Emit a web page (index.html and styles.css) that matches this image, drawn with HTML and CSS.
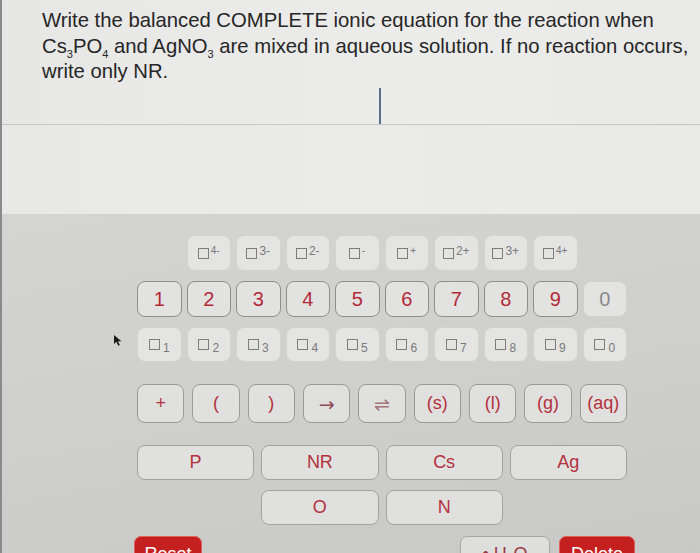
FILE: index.html
```html
<!DOCTYPE html>
<html>
<head>
<meta charset="utf-8">
<link rel="stylesheet" href="styles.css">
</head>
<body>
<div class="screen">
  <div class="question">
    <p class="prompt">Write the balanced COMPLETE ionic equation for the reaction when Cs<sub>3</sub>PO<sub>4</sub> and AgNO<sub>3</sub> are mixed in aqueous solution. If no reaction occurs, write only NR.</p>
    <div class="answer"><span class="caret"></span></div>
  </div>
  <div class="gap-area"></div>
  <div class="keypad">
    <div class="pad">
      <div class="row grid10 charges">
        <div class="key light first"><span class="lbl"><span class="box"></span><sup>4-</sup></span></div>
        <div class="key light"><span class="lbl"><span class="box"></span><sup class="big">3-</sup></span></div>
        <div class="key light"><span class="lbl"><span class="box"></span><sup class="big">2-</sup></span></div>
        <div class="key light"><span class="lbl"><span class="box"></span><sup>-</sup></span></div>
        <div class="key light"><span class="lbl"><span class="box"></span><sup>+</sup></span></div>
        <div class="key light"><span class="lbl"><span class="box"></span><sup class="big">2+</sup></span></div>
        <div class="key light"><span class="lbl"><span class="box"></span><sup class="big">3+</sup></span></div>
        <div class="key light"><span class="lbl"><span class="box"></span><sup>4+</sup></span></div>
      </div>
      <div class="row grid10 digits">
        <div class="key dig">1</div>
        <div class="key dig">2</div>
        <div class="key dig">3</div>
        <div class="key dig">4</div>
        <div class="key dig">5</div>
        <div class="key dig">6</div>
        <div class="key dig">7</div>
        <div class="key dig">8</div>
        <div class="key dig">9</div>
        <div class="key dig off">0</div>
      </div>
      <div class="row grid10 subs">
        <div class="key light"><span class="lbl"><span class="box"></span><sub>1</sub></span></div>
        <div class="key light"><span class="lbl"><span class="box"></span><sub>2</sub></span></div>
        <div class="key light"><span class="lbl"><span class="box"></span><sub>3</sub></span></div>
        <div class="key light"><span class="lbl"><span class="box"></span><sub>4</sub></span></div>
        <div class="key light"><span class="lbl"><span class="box"></span><sub>5</sub></span></div>
        <div class="key light"><span class="lbl"><span class="box"></span><sub>6</sub></span></div>
        <div class="key light"><span class="lbl"><span class="box"></span><sub>7</sub></span></div>
        <div class="key light"><span class="lbl"><span class="box"></span><sub>8</sub></span></div>
        <div class="key light"><span class="lbl"><span class="box"></span><sub>9</sub></span></div>
        <div class="key light"><span class="lbl"><span class="box"></span><sub>0</sub></span></div>
      </div>
      <div class="row grid9 symbols">
        <div class="key sym">+</div>
        <div class="key sym">(</div>
        <div class="key sym">)</div>
        <div class="key sym arrow">→</div>
        <div class="key sym eq">⇌</div>
        <div class="key sym">(s)</div>
        <div class="key sym">(l)</div>
        <div class="key sym">(g)</div>
        <div class="key sym">(aq)</div>
      </div>
      <div class="row grid4 elements">
        <div class="key el">P</div>
        <div class="key el">NR</div>
        <div class="key el">Cs</div>
        <div class="key el">Ag</div>
      </div>
      <div class="row grid4 elements second">
        <div class="key el first2">O</div>
        <div class="key el">N</div>
      </div>
      <div class="row actions">
        <div class="btn red reset">Reset</div>
        <div class="right-actions">
          <div class="btn hydrate"><span>• H<sub>2</sub>O</span></div>
          <div class="btn red delete">Delete</div>
        </div>
      </div>
    </div>
    <svg class="pointer" width="10" height="13" viewBox="0 0 10 13"><path d="M1 1 L1 10 L3.4 7.8 L5.2 11.8 L6.8 11.1 L5 7.2 L8.4 7.2 Z" fill="#1a1a1a"/></svg>
  </div>
</div>
</body>
</html>
```
FILE: styles.css
```css
html, body {
  margin: 0;
  padding: 0;
}
body {
  width: 700px;
  height: 553px;
  overflow: hidden;
  background: #d0d0ce;
  font-family: "Liberation Sans", Arial, sans-serif;
}
.screen {
  border-left: 2px solid #8a8a8a;
  height: 553px;
  box-sizing: border-box;
}
.question {
  background: linear-gradient(90deg, #e7e7e6 0%, #ececeb 60%, #e9e9e8 100%);
  height: 125px;
  box-sizing: border-box;
  padding: 8px 10px 0 40px;
  border-bottom: 1px solid #c6c6c5;
}
.prompt {
  margin: 0;
  font-size: 20.3px;
  line-height: 25.5px;
  color: #262626;
  width: 648px;
}
.prompt sub {
  font-size: 11px;
  vertical-align: -5px;
  line-height: 0;
}
.answer {
  padding-left: 337px;
  margin-top: 3px;
  height: 36px;
}
.caret {
  display: block;
  width: 1.5px;
  height: 36px;
  background: #5c6e88;
}
.gap-area {
  height: 89px;
  background: linear-gradient(90deg, #e8e8e7 0%, #ebebea 50%, #e9e9e8 100%);
}
.keypad {
  height: 339px;
  box-sizing: border-box;
  position: relative;
  overflow: hidden;
  background: linear-gradient(170deg, #d4d4d2 0%, #cfcfcd 50%, #c8c8c6 100%);
  padding-top: 21px;
}
.pad {
  width: 490px;
  margin-left: 135px;
}
.row {
  display: grid;
}
.grid10 {
  grid-template-columns: repeat(10, 1fr);
  column-gap: 5px;
}
.grid9 {
  grid-template-columns: repeat(9, 1fr);
  column-gap: 8px;
}
.grid4 {
  grid-template-columns: repeat(4, 1fr);
  column-gap: 7px;
}
.charges { height: 36px; }
.charges .first { grid-column-start: 2; }
.digits { height: 36px; margin-top: 10px; }
.subs { height: 35px; margin-top: 10px; }
.symbols { height: 39px; margin-top: 22px; }
.elements { height: 35px; margin-top: 22px; }
.elements.second { margin-top: 10px; }
.second .first2 { grid-column-start: 2; }
.key {
  box-sizing: border-box;
  border-radius: 8px;
  display: flex;
  align-items: center;
  justify-content: center;
}
.light {
  background: #e4e4e2;
  border: 1px solid #d2d2d0;
  color: #7a7a7a;
  font-size: 12px;
}
.lbl {
  display: flex;
  height: 11px;
  position: relative;
}
.box {
  display: block;
  width: 11px;
  height: 11px;
  border: 1px solid #7c7c7c;
  box-sizing: border-box;
}
.light sup {
  display: block;
  font-size: 10px;
  line-height: 10px;
  margin-top: -2px;
  margin-left: 2px;
}
.light sup.big {
  font-size: 12px;
  line-height: 12px;
  margin-top: -3px;
}
.light sub {
  display: block;
  font-size: 12px;
  line-height: 12px;
  margin-top: 3px;
  margin-left: 3px;
}
.charges .lbl { margin-top: 1px; }
.subs .lbl { margin-top: 0; }
.dig {
  background: #e2e2e0;
  border: 1.5px solid #8e8e8e;
  color: #b22a38;
  font-size: 20px;
}
.dig.off {
  border-color: #d0d0ce;
  color: #8a8a8a;
  background: #e3e3e1;
}
.sym {
  background: #e0e0de;
  border: 1px solid #9a9a98;
  color: #b3313e;
  font-size: 18px;
}
.sym.arrow {
  font-family: "DejaVu Sans", sans-serif;
  font-size: 19px;
  color: #8c4a52;
}
.sym.eq {
  font-family: "DejaVu Sans", sans-serif;
  font-size: 19px;
  color: #a37478;
}
.el {
  background: #e0e0de;
  border: 1px solid #a2a2a0;
  color: #b3313e;
  font-size: 18px;
}
.actions {
  display: flex;
  justify-content: space-between;
  margin-top: 11px;
  margin-left: -3px;
  margin-right: -8px;
}
.right-actions {
  display: flex;
  gap: 9px;
}
.btn {
  height: 34px;
  box-sizing: border-box;
  border-radius: 7px;
  font-size: 18px;
  line-height: 21px;
  text-align: center;
  padding-top: 7px;
}
.red {
  background: #c3201f;
  color: #ffffff;
  border: 1px solid #e0605a;
}
.reset { width: 68px; }
.delete { width: 76px; }
.hydrate {
  width: 90px;
  background: #dededc;
  border: 1px solid #a8a8a6;
  color: #9a3a44;
}
.hydrate sub {
  font-size: 12px;
  line-height: 0;
}
.pointer {
  position: absolute;
  left: 111px;
  top: 120px;
}
```
